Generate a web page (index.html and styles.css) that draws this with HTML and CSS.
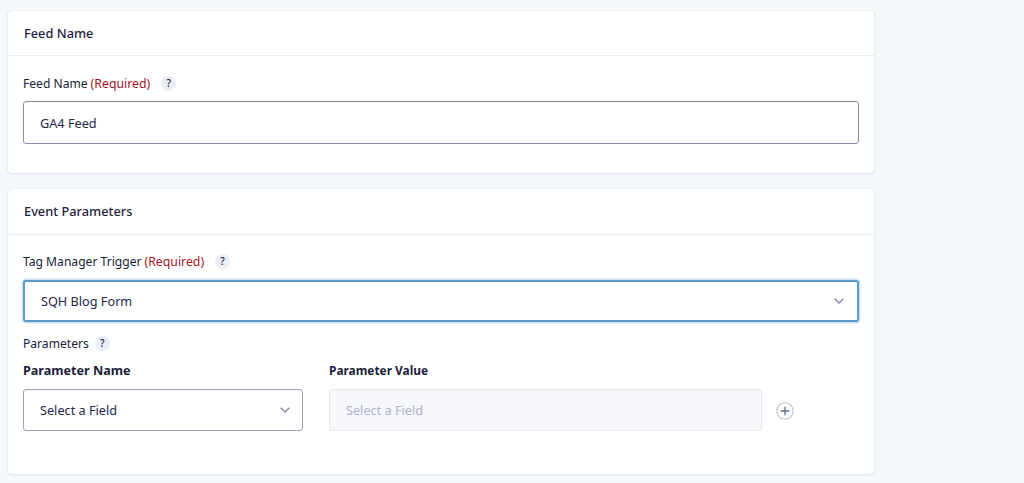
FILE: index.html
```html
<!DOCTYPE html>
<html lang="en">
<head>
<meta charset="utf-8">
<title>Feed Settings</title>
<link rel="stylesheet" href="styles.css">
</head>
<body>
<main class="page">
  <section class="card card-feed">
    <h2 class="card-title">Feed Name</h2>
    <div class="card-body">
      <div class="label-row">
        <span class="label">Feed Name</span><span class="req">(Required)</span>
        <span class="help">?</span>
      </div>
      <div class="control control-text">GA4 Feed</div>
    </div>
  </section>
  <section class="card card-event">
    <h2 class="card-title">Event Parameters</h2>
    <div class="card-body">
      <div class="label-row">
        <span class="label">Tag Manager Trigger</span><span class="req">(Required)</span>
        <span class="help">?</span>
      </div>
      <div class="control control-focus">
        <span>SQH Blog Form</span>
        <svg class="chev" viewBox="0 0 10 6" width="10" height="6"><path d="M.6.8 5 5 9.4.8" fill="none" stroke="#8a8ab0" stroke-width="1.5"/></svg>
      </div>
      <div class="label-row label-row-params">
        <span class="label">Parameters</span>
        <span class="help">?</span>
      </div>
      <div class="param-grid">
        <div class="param-col param-name">
          <div class="param-head">Parameter Name</div>
          <div class="control control-select">
            <span>Select a Field</span>
            <svg class="chev" viewBox="0 0 10 6" width="10" height="6"><path d="M.6.8 5 5 9.4.8" fill="none" stroke="#8a8ab0" stroke-width="1.5"/></svg>
          </div>
        </div>
        <div class="param-col param-value">
          <div class="param-head param-head-value">Parameter Value</div>
          <div class="control control-disabled">Select a Field</div>
        </div>
        <svg class="add" viewBox="0 0 18 18" width="18" height="18"><circle cx="9" cy="9" r="8.2" fill="none" stroke="#b9bdd6" stroke-width="1.1"/><path d="M9 4.8v8.4M4.8 9h8.4" stroke="#5b6b8c" stroke-width="1.3"/></svg>
      </div>
    </div>
  </section>
</main>
</body>
</html>
```
FILE: styles.css
```css
* { box-sizing: border-box; }
html, body { margin: 0; height: 483px; overflow: hidden; }
body {
  background: #f6f9fc;
  font-family: "Noto Sans", "Open Sans", sans-serif;
  color: #242748;
}
.page {
  width: 866px;
  margin-left: 8px;
  padding-top: 11px;
  display: flex;
  flex-direction: column;
  gap: 16px;
}
.card {
  background: #fff;
  border-radius: 3px;
  box-shadow: 0 0 1px rgba(40, 50, 110, .25), 0 1px 3px rgba(40, 50, 110, .1);
}
.card-feed { height: 162px; }
.card-event { height: 285px; }
.card-title {
  margin: 0;
  height: 45px;
  padding-left: 16px;
  display: flex;
  align-items: center;
  font-size: 12.8px;
  font-weight: 500;
  color: #1f2340;
  border-bottom: 1px solid #ebedf5;
}
.card-event .card-title { height: 46px; padding-bottom: 2px; }
.card-body { padding: 17px 15px 0; }
.card-event .card-body { padding-top: 16px; }
.label-row {
  height: 20px;
  display: flex;
  align-items: center;
  font-size: 12.1px;
  font-weight: 400;
  color: #1a1d38;
}
.req { margin-left: 3px; color: #a4161f; font-size: 12.3px; }
.help {
  width: 15px;
  height: 15px;
  margin-left: 11px;
  border-radius: 50%;
  background: #ebedf7;
  font-size: 10px;
  font-weight: 500;
  display: flex;
  align-items: center;
  justify-content: center;
}
.control {
  height: 43px;
  margin-top: 8px;
  padding: 0 14px 0 16px;
  display: flex;
  align-items: center;
  justify-content: space-between;
  background: #fff;
  border: 1px solid #8a8ab0;
  border-radius: 3px;
  font-size: 12.7px;
  color: #242748;
}
.control-focus {
  margin-top: 9px;
  height: 42px;
  padding-right: 13px;
  border-color: #5c9bcb;
  box-shadow: 0 0 0 1.5px #cfe2f2;
  border-width: 2px;
}
.control-select {
  height: 42px;
  padding-right: 12px;
  border-color: #a0a0c2;
  border-width: 1.5px;
}
.control-disabled {
  height: 42px;
  background: #f6f7fb;
  border-color: #e6e8f0;
  color: #b0b2cc;
}
.label-row-params { margin-top: 11px; }
.label-row-params .help { margin-left: 6px; }
.param-grid {
  display: flex;
  align-items: flex-end;
  margin-top: 8px;
}
.param-col { display: flex; flex-direction: column; }
.param-name { width: 280px; }
.param-value { width: 433px; margin-left: 26px; }
.param-head {
  height: 19px;
  padding-top: 1px;
  font-size: 12.6px;
  font-weight: 700;
  color: #1b1e3a;
}
.param-head-value { font-size: 11.9px; }
.param-col .control { margin-top: 9px; }
.add { margin: 0 0 11px 14px; }
```
